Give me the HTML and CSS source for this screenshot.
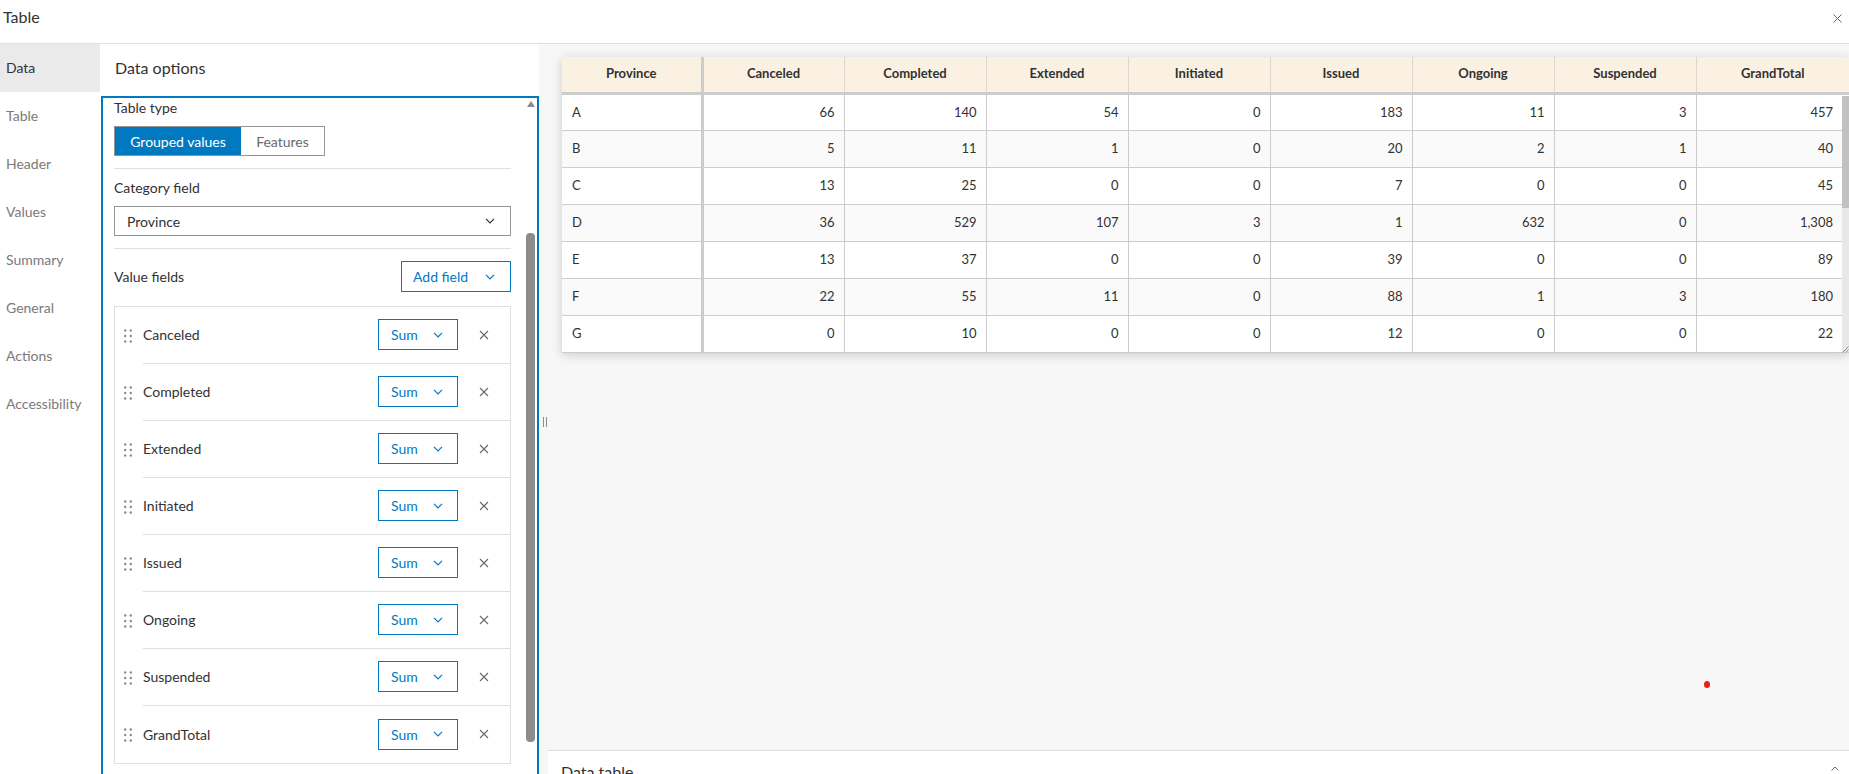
FILE: index.html
```html
<!DOCTYPE html>
<html lang="en">
<head>
<meta charset="utf-8">
<title>Table</title>
<link rel="stylesheet" href="styles.css">
</head>
<body>
<div class="app">
  <header class="titlebar">
    <span class="title">Table</span>
    <span class="close"><svg width="9" height="9" viewBox="0 0 9 9"><path d="M0.5 0.5l8 8M8.5 0.5l-8 8" stroke="#6a6a6a" stroke-width="1"/></svg></span>
  </header>
  <div class="main">
    <nav class="nav">
      <div class="nav-item active">Data</div>
      <div class="nav-item">Table</div>
      <div class="nav-item">Header</div>
      <div class="nav-item">Values</div>
      <div class="nav-item">Summary</div>
      <div class="nav-item">General</div>
      <div class="nav-item">Actions</div>
      <div class="nav-item">Accessibility</div>
    </nav>
    <section class="panel">
      <h2 class="panel-title">Data options</h2>
      <div class="panel-box">
        <div class="panel-scroll">
          <div class="field-label">Table type</div>
          <div class="segmented"><span class="seg active">Grouped values</span><span class="seg">Features</span></div>
          <div class="sep"></div>
          <div class="field-label cat">Category field</div>
          <div class="select"><span>Province</span><svg class="chev" width="10" height="6" viewBox="0 0 10 6"><path d="M1 0.8l4 4 4-4" fill="none" stroke="#323232" stroke-width="1.2"/></svg></div>
          <div class="sep"></div>
          <div class="value-head">
            <span>Value fields</span>
            <span class="add-btn">Add field<svg class="chev" width="10" height="6" viewBox="0 0 10 6"><path d="M1 0.8l4 4 4-4" fill="none" stroke="#0079c1" stroke-width="1.2"/></svg></span>
          </div>
          <ul class="value-list">
            <li class="vitem"><span class="handle"><svg width="8" height="14" viewBox="0 0 8 14"><circle cx="1.2" cy="1.5" r="1.2"/><circle cx="6.8" cy="1.5" r="1.2"/><circle cx="1.2" cy="7" r="1.2"/><circle cx="6.8" cy="7" r="1.2"/><circle cx="1.2" cy="12.5" r="1.2"/><circle cx="6.8" cy="12.5" r="1.2"/></svg></span><div class="vbody"><span class="vlabel">Canceled</span><span class="sum">Sum<svg class="chev" width="10" height="6" viewBox="0 0 10 6"><path d="M1 0.8l4 4 4-4" fill="none" stroke="#0079c1" stroke-width="1.2"/></svg></span><span class="remove"><svg width="10" height="10" viewBox="0 0 10 10"><path d="M1 1l8 8M9 1l-8 8" stroke="#6a6a6a" stroke-width="1.1"/></svg></span></div></li>
            <li class="vitem"><span class="handle"><svg width="8" height="14" viewBox="0 0 8 14"><circle cx="1.2" cy="1.5" r="1.2"/><circle cx="6.8" cy="1.5" r="1.2"/><circle cx="1.2" cy="7" r="1.2"/><circle cx="6.8" cy="7" r="1.2"/><circle cx="1.2" cy="12.5" r="1.2"/><circle cx="6.8" cy="12.5" r="1.2"/></svg></span><div class="vbody"><span class="vlabel">Completed</span><span class="sum">Sum<svg class="chev" width="10" height="6" viewBox="0 0 10 6"><path d="M1 0.8l4 4 4-4" fill="none" stroke="#0079c1" stroke-width="1.2"/></svg></span><span class="remove"><svg width="10" height="10" viewBox="0 0 10 10"><path d="M1 1l8 8M9 1l-8 8" stroke="#6a6a6a" stroke-width="1.1"/></svg></span></div></li>
            <li class="vitem"><span class="handle"><svg width="8" height="14" viewBox="0 0 8 14"><circle cx="1.2" cy="1.5" r="1.2"/><circle cx="6.8" cy="1.5" r="1.2"/><circle cx="1.2" cy="7" r="1.2"/><circle cx="6.8" cy="7" r="1.2"/><circle cx="1.2" cy="12.5" r="1.2"/><circle cx="6.8" cy="12.5" r="1.2"/></svg></span><div class="vbody"><span class="vlabel">Extended</span><span class="sum">Sum<svg class="chev" width="10" height="6" viewBox="0 0 10 6"><path d="M1 0.8l4 4 4-4" fill="none" stroke="#0079c1" stroke-width="1.2"/></svg></span><span class="remove"><svg width="10" height="10" viewBox="0 0 10 10"><path d="M1 1l8 8M9 1l-8 8" stroke="#6a6a6a" stroke-width="1.1"/></svg></span></div></li>
            <li class="vitem"><span class="handle"><svg width="8" height="14" viewBox="0 0 8 14"><circle cx="1.2" cy="1.5" r="1.2"/><circle cx="6.8" cy="1.5" r="1.2"/><circle cx="1.2" cy="7" r="1.2"/><circle cx="6.8" cy="7" r="1.2"/><circle cx="1.2" cy="12.5" r="1.2"/><circle cx="6.8" cy="12.5" r="1.2"/></svg></span><div class="vbody"><span class="vlabel">Initiated</span><span class="sum">Sum<svg class="chev" width="10" height="6" viewBox="0 0 10 6"><path d="M1 0.8l4 4 4-4" fill="none" stroke="#0079c1" stroke-width="1.2"/></svg></span><span class="remove"><svg width="10" height="10" viewBox="0 0 10 10"><path d="M1 1l8 8M9 1l-8 8" stroke="#6a6a6a" stroke-width="1.1"/></svg></span></div></li>
            <li class="vitem"><span class="handle"><svg width="8" height="14" viewBox="0 0 8 14"><circle cx="1.2" cy="1.5" r="1.2"/><circle cx="6.8" cy="1.5" r="1.2"/><circle cx="1.2" cy="7" r="1.2"/><circle cx="6.8" cy="7" r="1.2"/><circle cx="1.2" cy="12.5" r="1.2"/><circle cx="6.8" cy="12.5" r="1.2"/></svg></span><div class="vbody"><span class="vlabel">Issued</span><span class="sum">Sum<svg class="chev" width="10" height="6" viewBox="0 0 10 6"><path d="M1 0.8l4 4 4-4" fill="none" stroke="#0079c1" stroke-width="1.2"/></svg></span><span class="remove"><svg width="10" height="10" viewBox="0 0 10 10"><path d="M1 1l8 8M9 1l-8 8" stroke="#6a6a6a" stroke-width="1.1"/></svg></span></div></li>
            <li class="vitem"><span class="handle"><svg width="8" height="14" viewBox="0 0 8 14"><circle cx="1.2" cy="1.5" r="1.2"/><circle cx="6.8" cy="1.5" r="1.2"/><circle cx="1.2" cy="7" r="1.2"/><circle cx="6.8" cy="7" r="1.2"/><circle cx="1.2" cy="12.5" r="1.2"/><circle cx="6.8" cy="12.5" r="1.2"/></svg></span><div class="vbody"><span class="vlabel">Ongoing</span><span class="sum">Sum<svg class="chev" width="10" height="6" viewBox="0 0 10 6"><path d="M1 0.8l4 4 4-4" fill="none" stroke="#0079c1" stroke-width="1.2"/></svg></span><span class="remove"><svg width="10" height="10" viewBox="0 0 10 10"><path d="M1 1l8 8M9 1l-8 8" stroke="#6a6a6a" stroke-width="1.1"/></svg></span></div></li>
            <li class="vitem"><span class="handle"><svg width="8" height="14" viewBox="0 0 8 14"><circle cx="1.2" cy="1.5" r="1.2"/><circle cx="6.8" cy="1.5" r="1.2"/><circle cx="1.2" cy="7" r="1.2"/><circle cx="6.8" cy="7" r="1.2"/><circle cx="1.2" cy="12.5" r="1.2"/><circle cx="6.8" cy="12.5" r="1.2"/></svg></span><div class="vbody"><span class="vlabel">Suspended</span><span class="sum">Sum<svg class="chev" width="10" height="6" viewBox="0 0 10 6"><path d="M1 0.8l4 4 4-4" fill="none" stroke="#0079c1" stroke-width="1.2"/></svg></span><span class="remove"><svg width="10" height="10" viewBox="0 0 10 10"><path d="M1 1l8 8M9 1l-8 8" stroke="#6a6a6a" stroke-width="1.1"/></svg></span></div></li>
            <li class="vitem"><span class="handle"><svg width="8" height="14" viewBox="0 0 8 14"><circle cx="1.2" cy="1.5" r="1.2"/><circle cx="6.8" cy="1.5" r="1.2"/><circle cx="1.2" cy="7" r="1.2"/><circle cx="6.8" cy="7" r="1.2"/><circle cx="1.2" cy="12.5" r="1.2"/><circle cx="6.8" cy="12.5" r="1.2"/></svg></span><div class="vbody"><span class="vlabel">GrandTotal</span><span class="sum">Sum<svg class="chev" width="10" height="6" viewBox="0 0 10 6"><path d="M1 0.8l4 4 4-4" fill="none" stroke="#0079c1" stroke-width="1.2"/></svg></span><span class="remove"><svg width="10" height="10" viewBox="0 0 10 10"><path d="M1 1l8 8M9 1l-8 8" stroke="#6a6a6a" stroke-width="1.1"/></svg></span></div></li>
          </ul>
        </div>
        <div class="vscroll"><span class="arrow-up"></span><span class="thumb"></span></div>
      </div>
    </section>
    <section class="stage">
      <div class="canvas">
        <span class="splitter"></span>
        <div class="table-wrap">
          <table class="grid">
            <colgroup>
              <col class="c-prov"><col class="c-num"><col class="c-num"><col class="c-num"><col class="c-num"><col class="c-num"><col class="c-num"><col class="c-num"><col class="c-last">
            </colgroup>
            <thead>
              <tr><th class="prov">Province</th><th>Canceled</th><th>Completed</th><th>Extended</th><th>Initiated</th><th>Issued</th><th>Ongoing</th><th>Suspended</th><th>GrandTotal</th></tr>
            </thead>
            <tbody>
              <tr><td class="prov">A</td><td>66</td><td>140</td><td>54</td><td>0</td><td>183</td><td>11</td><td>3</td><td class="last">457</td></tr>
              <tr><td class="prov">B</td><td>5</td><td>11</td><td>1</td><td>0</td><td>20</td><td>2</td><td>1</td><td class="last">40</td></tr>
              <tr><td class="prov">C</td><td>13</td><td>25</td><td>0</td><td>0</td><td>7</td><td>0</td><td>0</td><td class="last">45</td></tr>
              <tr><td class="prov">D</td><td>36</td><td>529</td><td>107</td><td>3</td><td>1</td><td>632</td><td>0</td><td class="last">1,308</td></tr>
              <tr><td class="prov">E</td><td>13</td><td>37</td><td>0</td><td>0</td><td>39</td><td>0</td><td>0</td><td class="last">89</td></tr>
              <tr><td class="prov">F</td><td>22</td><td>55</td><td>11</td><td>0</td><td>88</td><td>1</td><td>3</td><td class="last">180</td></tr>
              <tr><td class="prov">G</td><td>0</td><td>10</td><td>0</td><td>0</td><td>12</td><td>0</td><td>0</td><td class="last">22</td></tr>
            </tbody>
          </table>
          <div class="tscroll"><span class="tthumb"></span></div>
          <svg class="grip" width="8" height="8" viewBox="0 0 8 8"><path d="M7.5 1.5l-6 6M7.5 4.5l-3 3" stroke="#888" stroke-width="0.9"/></svg>
        </div>
        <span class="dot"></span>
      </div>
      <div class="bottom-panel">
        <span class="bp-title">Data table</span>
        <svg class="bp-chev" width="8" height="5" viewBox="0 0 8 5"><path d="M0.5 4.5l3.5-3.5 3.5 3.5" fill="none" stroke="#6a6a6a" stroke-width="1"/></svg>
      </div>
    </section>
  </div>
</div>
</body>
</html>
```

FILE: styles.css
```css
* { box-sizing: border-box; }
html, body { margin: 0; padding: 0; }
body {
  width: 1849px;
  height: 774px;
  overflow: hidden;
  font-family: Lato, "Noto Sans", sans-serif;
  color: #323232;
  background: #ffffff;
}
.app { display: flex; flex-direction: column; height: 774px; }

.titlebar {
  height: 44px;
  flex: none;
  border-bottom: 1px solid #e0e0e0;
  display: flex;
  align-items: flex-start;
  justify-content: space-between;
  padding: 7px 7px 0 3px;
}
.title { font-size: 16px; line-height: 20px; }
.close { display: flex; padding-top: 7px; padding-right: 0; }

.main { flex: 1; display: flex; min-height: 0; }

.nav { width: 100px; flex: none; }
.nav-item {
  height: 48px;
  display: flex;
  align-items: center;
  padding: 0 0 2px 6px;
  font-size: 14px;
  color: #7a7a7a;
}
.nav-item.active { background: #eaeaea; color: #323232; }

.panel { width: 439px; flex: none; display: flex; flex-direction: column; }
.panel-title {
  margin: 0;
  height: 52px;
  flex: none;
  font-size: 16px;
  font-weight: 400;
  display: flex;
  align-items: center;
  padding: 0 0 5px 15px;
}
.panel-box {
  flex: 1;
  margin-left: 1px;
  border: 2px solid #0079c1;
  border-bottom: none;
  display: flex;
  min-height: 0;
  overflow: hidden;
}
.panel-scroll { flex: 1; padding: 0 15px 0 11px; }
.field-label { font-size: 14px; line-height: 20px; margin-top: 0; }
.field-label.cat { margin-top: 9px; }

.segmented {
  margin-top: 8px;
  display: inline-flex;
  border: 1px solid #959595;
  height: 30px;
}
.seg {
  font-size: 14px;
  display: flex;
  align-items: center;
  color: #6a6a6a;
}
.seg.active { background: #0079c1; color: #ffffff; width: 126px; justify-content: center; padding: 0; }
.seg:not(.active) { width: 83px; justify-content: center; padding: 0; }

.sep { height: 1px; background: #e0e0e0; margin-top: 12px; }

.select {
  margin-top: 8px;
  height: 30px;
  border: 1px solid #959595;
  display: flex;
  align-items: center;
  justify-content: space-between;
  padding: 0 15px 0 12px;
  font-size: 14px;
}
.chev { display: block; }

.value-head {
  margin-top: 12px;
  display: flex;
  align-items: center;
  justify-content: space-between;
  font-size: 14px;
}
.add-btn {
  width: 110px;
  height: 31px;
  border: 1px solid #0079c1;
  color: #0079c1;
  display: flex;
  align-items: center;
  justify-content: space-between;
  padding: 0 15px 0 11px;
}

.value-list {
  list-style: none;
  margin: 14px 0 0 0;
  padding: 0;
  border: 1px solid #dfdfdf;
}
.vitem { display: flex; height: 57px; }
.handle { width: 28px; flex: none; display: flex; align-items: center; justify-content: center; fill: #8a8a8a; padding-right: 2px; }
.vbody {
  flex: 1;
  display: flex;
  align-items: center;
  border-bottom: 1px solid #dfdfdf;
  padding-bottom: 1px;
}
.vitem:last-child .vbody { border-bottom: none; }
.vlabel { flex: 1; font-size: 14px; }
.sum {
  width: 80px;
  height: 31px;
  border: 1px solid #0079c1;
  color: #0079c1;
  font-size: 14px;
  display: flex;
  align-items: center;
  justify-content: space-between;
  padding: 0 14px 0 12px;
}
.remove { width: 52px; display: flex; justify-content: center; }

.vscroll { width: 11px; flex: none; position: relative; }
.arrow-up {
  position: absolute;
  top: 3px;
  left: 1px;
  width: 0;
  height: 0;
  border-left: 4px solid transparent;
  border-right: 4px solid transparent;
  border-bottom: 6px solid #8c8c8c;
}
.thumb {
  position: absolute;
  top: 135px;
  left: 0;
  width: 9px;
  height: 509px;
  background: #8c8c8c;
  border-radius: 4px;
}

.stage { flex: 1; display: flex; flex-direction: column; background: #f7f7f7; min-width: 0; position: relative; }
.canvas { flex: 1; padding: 13px 0 0 23px; position: relative; }
.splitter {
  position: absolute;
  left: 4px;
  top: 373px;
  width: 4px;
  height: 10px;
  border-left: 1px solid #8c8c8c;
  border-right: 1px solid #8c8c8c;
}
.table-wrap {
  position: relative;
  width: 1287px;
  background: #ffffff;
  box-shadow: 0 2px 10px rgba(0, 0, 0, 0.18);
}
.grid {
  border-collapse: collapse;
  table-layout: fixed;
  width: 1287px;
  font-size: 13px;
}
.c-prov { width: 140px; }
.c-num { width: 142px; }
.c-last { width: 153px; }
.grid th {
  height: 36px;
  background: #faf1e3;
  font-weight: 700;
  text-align: center;
  border-right: 1px solid #dcd6cc;
  border-bottom: 3px solid #cccccc;
  padding: 0 8px 2px;
}
.grid th:last-child { border-right: none; }
.grid td {
  height: 37px;
  text-align: right;
  padding: 0 9px 1px 10px;
  border-right: 1px solid #cccccc;
  border-bottom: 1px solid #cccccc;
}
.grid tbody tr:nth-child(even) td { background: #fafafa; }
.grid .prov { border-right: 3px solid #cccccc; text-align: left; }
.grid th.prov { text-align: center; }
.grid td.last { padding-right: 16px; border-right: none; }

.tscroll {
  position: absolute;
  right: 0;
  top: 39px;
  bottom: 1px;
  width: 7px;
  background: #e8e8e8;
}
.tthumb {
  position: absolute;
  left: 0;
  top: 0;
  width: 7px;
  height: 112px;
  background: #c1c1c1;
}
.grip { position: absolute; right: 0; bottom: 0; }

.dot {
  position: absolute;
  left: 1165px;
  top: 637px;
  width: 6px;
  height: 7px;
  border-radius: 50%;
  background: #e8201f;
}

.bottom-panel {
  height: 24px;
  flex: none;
  margin-left: 9px;
  background: #ffffff;
  border-top: 1px solid #dcdcdc;
  display: flex;
  justify-content: space-between;
  align-items: flex-start;
  padding: 11px 10px 0 13px;
  overflow: hidden;
}
.bp-title { font-size: 16px; line-height: 20px; }
.bp-chev { margin-top: 4px; }
```
